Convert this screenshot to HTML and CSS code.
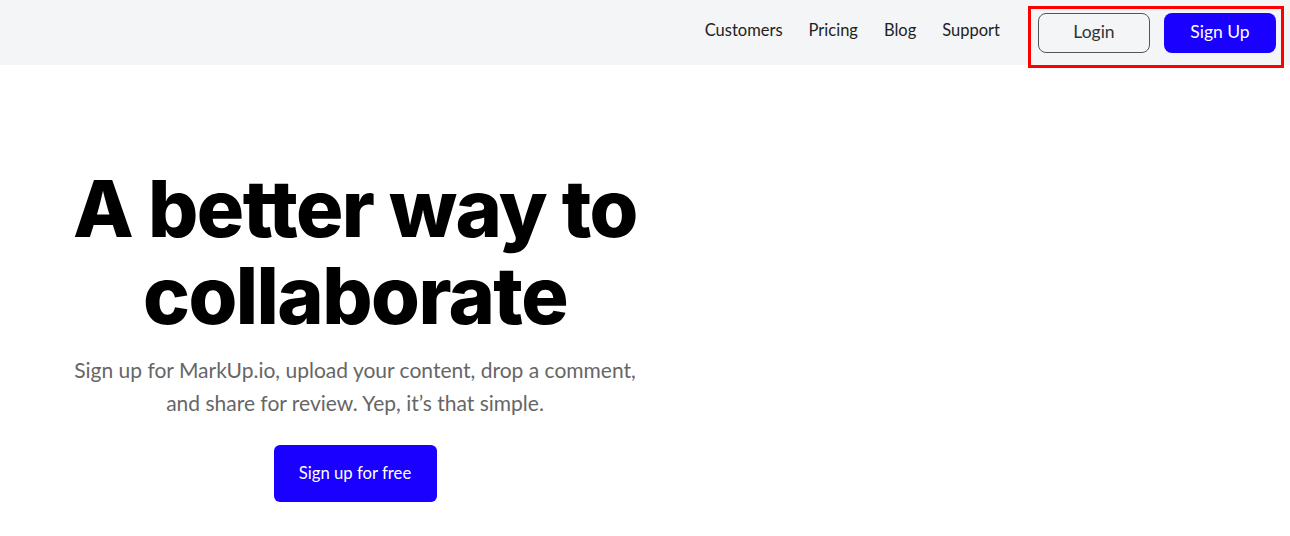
FILE: index.html
```html
<!DOCTYPE html>
<html lang="en">
<head>
<meta charset="utf-8">
<title>MarkUp.io</title>
<link rel="stylesheet" href="styles.css">
</head>
<body>
<header class="topbar">
  <nav class="nav">
    <a class="nav-link" href="#">Customers</a>
    <a class="nav-link" href="#">Pricing</a>
    <a class="nav-link" href="#">Blog</a>
    <a class="nav-link" href="#">Support</a>
  </nav>
  <div class="auth">
    <a class="btn btn-outline" href="#">Login</a>
    <a class="btn btn-primary" href="#">Sign Up</a>
  </div>
</header>
<main class="hero">
  <section class="hero-text">
    <h1 class="title">A better way to collaborate</h1>
    <p class="lead">Sign up for MarkUp.io, upload your content, drop a comment, and share for review. Yep, it’s that simple.</p>
    <a class="cta" href="#">Sign up for free</a>
  </section>
</main>
</body>
</html>
```

FILE: styles.css
```css
* { box-sizing: border-box; }
html, body { margin: 0; padding: 0; background: #fff; }
body { font-family: Lato, "Noto Sans", Arial, sans-serif; color: #222; }
a { text-decoration: none; }

.topbar {
  height: 65px;
  background: #f4f5f7;
  display: flex;
  align-items: center;
  justify-content: flex-end;
  padding-right: 14px;
}
.nav { display: flex; gap: 26px; align-items: center; margin-right: 38px; padding-bottom: 5px; }
.nav-link { color: #222; font-size: 16.5px; }

.auth { position: relative; display: flex; gap: 14px; }
.auth::after {
  content: "";
  position: absolute;
  left: -10px; right: -8px; top: -7px; bottom: -15px;
  border: 3px solid #ff0000;
  pointer-events: none;
}
.btn {
  width: 112px;
  height: 40px;
  border-radius: 8px;
  display: flex;
  align-items: center;
  justify-content: center;
  font-size: 17.5px;
  padding-bottom: 3px;
}
.btn-outline { border: 1px solid #555; color: #333; background: transparent; }
.btn-primary { background: #1a00ff; color: #fff; }

.hero { padding: 100px 0 0 64px; }
.hero-text { width: 582px; text-align: center; display: flex; flex-direction: column; align-items: center; }
.title {
  margin: 0;
  font-family: Inter, "Liberation Sans", Arial, sans-serif;
  font-weight: 800;
  font-size: 79px;
  line-height: 87px;
  letter-spacing: -0.02em;
  color: #000;
}
.lead {
  margin: 14px 0 0;
  font-size: 21px;
  line-height: 33px;
  color: #666;
}
.cta {
  margin-top: 26px;
  height: 57px;
  width: 163px;
  border-radius: 6px;
  background: #1a00ff;
  color: #fff;
  font-size: 16.7px;
  display: flex;
  align-items: center;
  justify-content: center;
  padding-bottom: 2px;
}
```
